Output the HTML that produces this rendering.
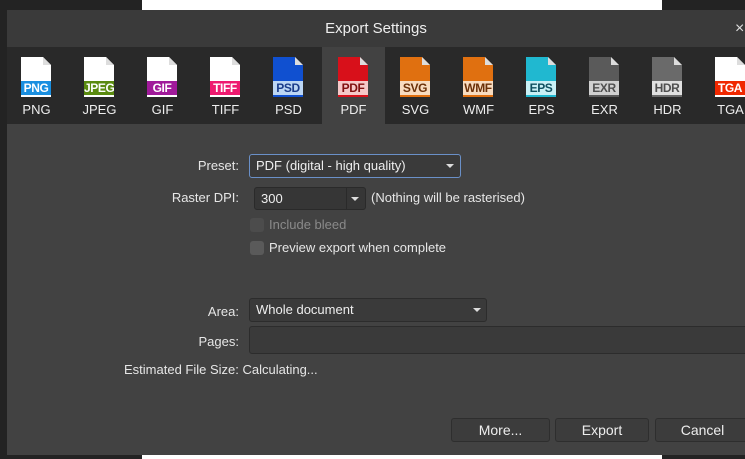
<!DOCTYPE html>
<html><head><meta charset="utf-8"><style>
*{margin:0;padding:0;box-sizing:border-box}
body{width:745px;height:459px;overflow:hidden;background:#232323;font-family:"Liberation Sans",sans-serif;position:relative;color:#e6e6e6;font-size:13px}
.abs{position:absolute}
.title{left:7px;top:10px;width:738px;height:37px;background:#3a3a3a;text-align:center;line-height:37px;font-size:15px;color:#eee}
.tabs{left:7px;top:47px;width:738px;height:77px;background:#292929}
.body{left:7px;top:124px;width:738px;height:331px;background:#424242}
.tab{position:absolute;top:47px;width:63px;height:77px;text-align:center}
.tab.sel{background:#424242}
.doc{position:absolute;left:16px;top:10px;width:30px;height:40px;clip-path:polygon(0 0,22px 0,30px 8px,30px 40px,0 40px)}
.fold{position:absolute;left:38px;top:10px;width:8px;height:8px;background:#ddd;clip-path:polygon(0 0,100% 100%,0 100%)}
.band{position:absolute;left:0;top:24px;width:30px;height:14px;font-size:12px;font-weight:bold;line-height:14px;color:#fff;letter-spacing:-.4px}
.lbl{position:absolute;left:0;width:63px;top:55px;font-size:13px;color:#eee}
.lab{position:absolute;text-align:right;color:#e6e6e6}
.field{position:absolute;border:1px solid #2c2c2c;border-radius:3px;background:#3a3a3a;padding-left:6px;line-height:22px;color:#eee}
.arrow{position:absolute;width:0;height:0;border-left:4px solid transparent;border-right:4px solid transparent;border-top:4px solid #ddd}
.cb{position:absolute;width:14px;height:14px;border-radius:3px;background:#5a5a5a}
.btn{position:absolute;top:418px;height:24px;border:1px solid #2e2e2e;border-radius:3px;background:#3c3c3c;text-align:center;line-height:22px;font-size:14px;color:#eee}
</style></head><body>
<div class="abs" style="left:142px;top:0;width:520px;height:10px;background:#fff"></div>
<div class="abs" style="left:142px;top:455px;width:520px;height:4px;background:#fff"></div>
<div class="abs title">Export Settings</div>
<div class="abs" style="left:735px;top:20px;color:#ddd;font-size:16px">×</div>
<div class="abs tabs"></div>
<div class="abs body"></div>

<div class="tab" style="left:5px"><div class="doc" style="background:#fff"><div class="band" style="background:#1a8fe0">PNG</div></div><div class="fold"></div><div class="lbl">PNG</div></div>
<div class="tab" style="left:68px"><div class="doc" style="background:#fff"><div class="band" style="background:#5a8a10">JPEG</div></div><div class="fold"></div><div class="lbl">JPEG</div></div>
<div class="tab" style="left:131px"><div class="doc" style="background:#fff"><div class="band" style="background:#a01a9a">GIF</div></div><div class="fold"></div><div class="lbl">GIF</div></div>
<div class="tab" style="left:194px"><div class="doc" style="background:#fff"><div class="band" style="background:#ee1a70">TIFF</div></div><div class="fold"></div><div class="lbl">TIFF</div></div>
<div class="tab" style="left:257px"><div class="doc" style="background:#1050d0"><div class="band" style="background:#bcd6f4;color:#1a3c8a">PSD</div></div><div class="fold"></div><div class="lbl">PSD</div></div>
<div class="tab sel" style="left:322px"><div class="doc" style="background:#d8101a"><div class="band" style="background:#f6c8c8;color:#801010">PDF</div></div><div class="fold"></div><div class="lbl">PDF</div></div>
<div class="tab" style="left:384px"><div class="doc" style="background:#e07010"><div class="band" style="background:#f8dcc0;color:#6a3008">SVG</div></div><div class="fold"></div><div class="lbl">SVG</div></div>
<div class="tab" style="left:447px"><div class="doc" style="background:#e07010"><div class="band" style="background:#f8dcc0;color:#6a3008">WMF</div></div><div class="fold"></div><div class="lbl">WMF</div></div>
<div class="tab" style="left:510px"><div class="doc" style="background:#20b8d0"><div class="band" style="background:#c8f0f6;color:#105060">EPS</div></div><div class="fold"></div><div class="lbl">EPS</div></div>
<div class="tab" style="left:573px"><div class="doc" style="background:#5a5a5a"><div class="band" style="background:#d0d0d0;color:#505050">EXR</div></div><div class="fold"></div><div class="lbl">EXR</div></div>
<div class="tab" style="left:636px"><div class="doc" style="background:#6a6a6a"><div class="band" style="background:#e0e0e0;color:#505050">HDR</div></div><div class="fold"></div><div class="lbl">HDR</div></div>
<div class="tab" style="left:699px"><div class="doc" style="background:#fff"><div class="band" style="background:#f02800">TGA</div></div><div class="fold"></div><div class="lbl">TGA</div></div>

<div class="lab" style="left:100px;width:139px;top:158px">Preset:</div>
<div class="field" style="left:249px;top:154px;width:212px;height:24px;border:1px solid #6a90c8;line-height:21px">PDF (digital - high quality)</div>
<div class="arrow" style="left:446px;top:164px"></div>

<div class="lab" style="left:100px;width:139px;top:190px">Raster DPI:</div>
<div class="field" style="left:254px;top:187px;width:112px;height:23px;background:#363636;border-color:#2a2a2a">300</div>
<div class="abs" style="left:346px;top:188px;width:1px;height:21px;background:#2a2a2a"></div>
<div class="arrow" style="left:351px;top:197px"></div>
<div class="abs" style="left:371px;top:190px">(Nothing will be rasterised)</div>

<div class="cb" style="left:250px;top:218px;background:#4c4c4c"></div>
<div class="abs" style="left:269px;top:217px;color:#8a8a8a">Include bleed</div>
<div class="cb" style="left:250px;top:241px"></div>
<div class="abs" style="left:269px;top:240px">Preview export when complete</div>

<div class="lab" style="left:100px;width:139px;top:304px">Area:</div>
<div class="field" style="left:249px;top:298px;width:238px;height:24px">Whole document</div>
<div class="arrow" style="left:473px;top:308px"></div>

<div class="lab" style="left:100px;width:139px;top:334px">Pages:</div>
<div class="field" style="left:249px;top:326px;width:500px;height:28px"></div>

<div class="abs" style="left:124px;top:362px">Estimated File Size: Calculating...</div>

<div class="btn" style="left:451px;width:99px">More...</div>
<div class="btn" style="left:555px;width:94px">Export</div>
<div class="btn" style="left:655px;width:95px">Cancel</div>
</body></html>
